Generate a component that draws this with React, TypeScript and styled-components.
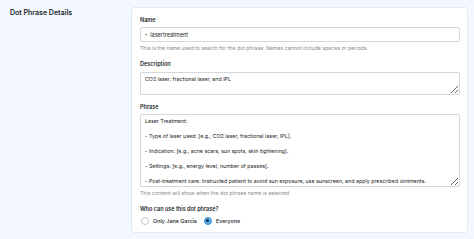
import styled, { createGlobalStyle } from "styled-components";

const GlobalStyle = createGlobalStyle`
  html, body {
    margin: 0;
    padding: 0;
    background: #f2f8fd;
  }
  body {
    font-family: Inter, "Noto Sans", sans-serif;
    color: #1f2328;
  }
`;

const phraseText = `Laser Treatment:

- Type of laser used: [e.g., CO2 laser, fractional laser, IPL].

- Indication: [e.g., acne scars, sun spots, skin tightening].

- Settings: [e.g., energy level, number of passes].

- Post-treatment care: Instructed patient to avoid sun exposure, use sunscreen, and apply prescribed ointments.`;

const App = () => {
  return (
    <>
      <GlobalStyle />
      <Page>
        <SectionTitle>Dot Phrase Details</SectionTitle>
        <Card>
          <Field>
            <Label>Name</Label>
            <InputBox>
              <Prefix>•</Prefix>
              <TextInput defaultValue="lasertreatment" />
            </InputBox>
            <Help>This is the name used to search for the dot phrase. Names cannot include spaces or periods.</Help>
          </Field>

          <Field>
            <Label>Description</Label>
            <TextArea $height={23} defaultValue="CO2 laser, fractional laser, and IPL" />
          </Field>

          <Field>
            <Label>Phrase</Label>
            <TextArea $height={73} defaultValue={phraseText} />
            <Help>This content will show when the dot phrase name is selected</Help>
          </Field>

          <Field $last>
            <Label>Who can use this dot phrase?</Label>
            <RadioRow>
              <RadioOption>
                <RadioDot />
                <span>Only Jane Garcia</span>
              </RadioOption>
              <RadioOption>
                <RadioDot $checked />
                <span>Everyone</span>
              </RadioOption>
            </RadioRow>
          </Field>
        </Card>
      </Page>
    </>
  );
};

const Page = styled.div`
  display: grid;
  grid-template-columns: 121px 337px;
  padding: 7px 0 0 10px;
  height: 239px;
  box-sizing: border-box;
`;

const SectionTitle = styled.div`
  font-size: 7px;
  font-weight: 600;
  line-height: 9px;
  margin-top: 1px;
  color: #23272b;
`;

const Card = styled.div`
  background: #fff;
  border: 1px solid #e3e9ef;
  border-radius: 3px;
  padding: 8.5px 7px 8px 8px;
  height: 226px;
  box-sizing: border-box;
`;

const Field = styled.div<{ $last?: boolean }>`
  display: flex;
  flex-direction: column;
  margin-bottom: ${(p) => (p.$last ? 0 : 9)}px;
`;

const Label = styled.div`
  font-size: 5.5px;
  font-weight: 600;
  line-height: 7px;
  color: #22262a;
  margin-bottom: 3.5px;
`;

const InputBox = styled.div`
  display: flex;
  align-items: center;
  height: 15px;
  box-sizing: border-box;
  border: 1px solid #d3d8dd;
  border-radius: 2px;
  padding: 0 4px;
  gap: 3px;
`;

const Prefix = styled.span`
  font-size: 4px;
  color: #333;
  line-height: 1;
`;

const TextInput = styled.input`
  border: none;
  outline: none;
  padding: 0;
  flex: 1;
  font-family: Inter, "Noto Sans", sans-serif;
  font-size: 5.5px;
  color: #222;
  background: transparent;
`;

const TextArea = styled.textarea<{ $height: number }>`
  height: ${(p) => p.$height}px;
  box-sizing: border-box;
  border: 1px solid #d3d8dd;
  border-radius: 2px;
  padding: 3.25px 4px;
  font-family: Inter, "Noto Sans", sans-serif;
  font-size: 5.3px;
  line-height: 7.5px;
  color: #222;
  overflow: hidden;
  resize: vertical;
  outline: none;
  white-space: pre-wrap;
`;

const Help = styled.div`
  font-size: 5.2px;
  line-height: 7px;
  color: #868b91;
  margin-top: 3px;
`;

const RadioRow = styled.div`
  display: flex;
  align-items: center;
  gap: 6px;
  height: 8px;
`;

const RadioOption = styled.label`
  display: flex;
  align-items: center;
  gap: 4px;
  font-size: 5.4px;
  font-weight: 500;
  color: #22262a;
`;

const RadioDot = styled.span<{ $checked?: boolean }>`
  width: 8px;
  height: 8px;
  border-radius: 50%;
  box-sizing: border-box;
  border: 1px solid ${(p) => (p.$checked ? "#3a97dc" : "#bfc5cb")};
  background: ${(p) => (p.$checked ? "#56acea" : "#fff")};
  display: flex;
  align-items: center;
  justify-content: center;
  margin-left: 1px;
  &::after {
    content: "";
    width: 3px;
    height: 3px;
    border-radius: 50%;
    background: #1b2b3d;
    display: ${(p) => (p.$checked ? "block" : "none")};
  }
`;

export default App;
